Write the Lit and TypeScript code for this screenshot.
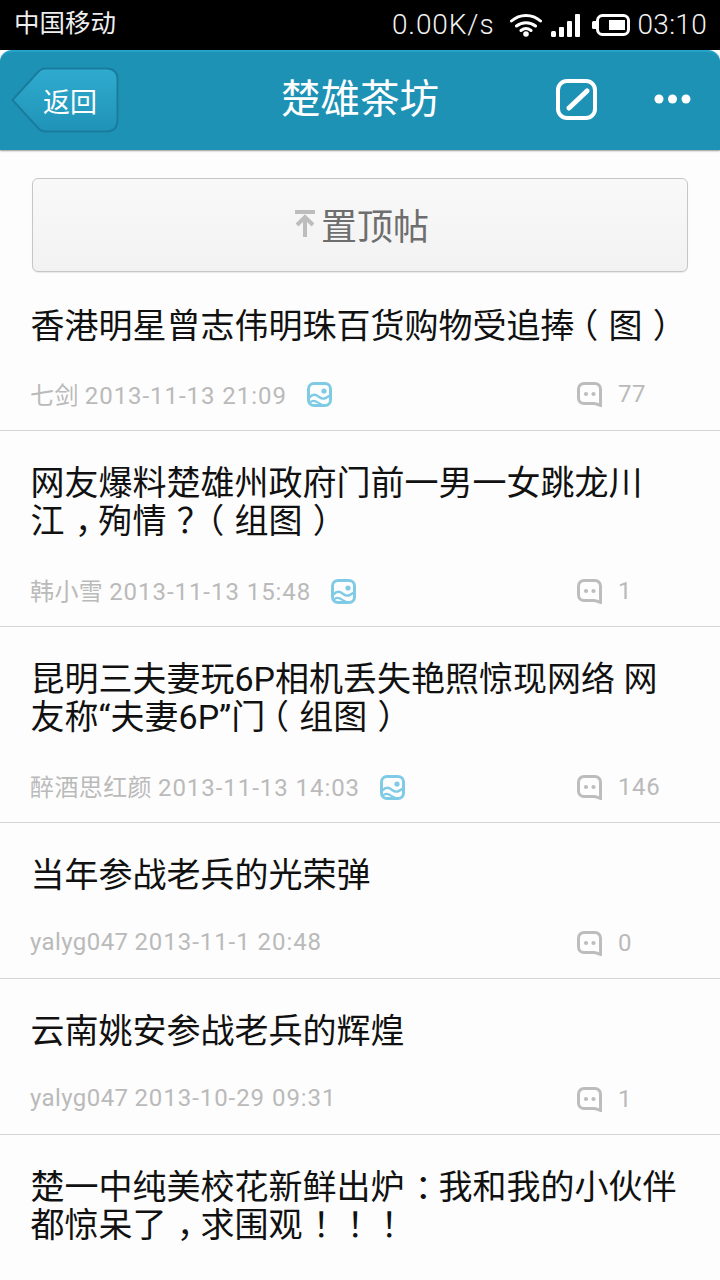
import { LitElement, css, html, svg } from 'lit';
import { customElement } from 'lit/decorators.js';

interface Post {
  title: string;
  author?: string;
  date?: string;
  hasImage?: boolean;
  replies?: number;
  wrapped?: boolean; // title takes two lines
}

const POSTS: Post[] = [
  { title: '香港明星曾志伟明珠百货购物受追捧（图）', author: '七剑', date: '2013-11-13 21:09', hasImage: true, replies: 77 },
  { title: '网友爆料楚雄州政府门前一男一女跳龙川江，殉情？（组图）', author: '韩小雪', date: '2013-11-13 15:48', hasImage: true, replies: 1, wrapped: true },
  { title: '昆明三夫妻玩6P相机丢失艳照惊现网络 网友称“夫妻6P”门（组图）', author: '醉酒思红颜', date: '2013-11-13 14:03', hasImage: true, replies: 146, wrapped: true },
  { title: '当年参战老兵的光荣弹', author: 'yalyg047', date: '2013-11-1 20:48', replies: 0 },
  { title: '云南姚安参战老兵的辉煌', author: 'yalyg047', date: '2013-10-29 09:31', replies: 1 },
  { title: '楚一中纯美校花新鲜出炉：我和我的小伙伴都惊呆了，求围观！！！', wrapped: true },
];

const imageIcon = svg`<svg width="25" height="25" viewBox="0 0 25 25">
  <rect x="1.500" y="1.500" width="22" height="22" rx="5.500" fill="none" stroke="#7fcbe6" stroke-width="3"/>
  <circle cx="17" cy="9" r="2.600" fill="#7fcbe6"/>
  <path d="M2.500 15.500c2.500-3 5-3.500 7.500-2s4.500 4 7.500 3 3-2 5-2.500" fill="none" stroke="#7fcbe6" stroke-width="2.400"/>
  <path d="M3 20.500c2-2 4-2 6-1s4 2.500 6 3" fill="none" stroke="#7fcbe6" stroke-width="2"/>
</svg>`;

const replyIcon = svg`<svg width="25" height="25" viewBox="0 0 25 25">
  <path d="M7 1.500h11a5.500 5.500 0 0 1 5.500 5.500v10c0 2 0 4 .2 6.500-2.500-1-4.700-2-6.700-2H7A5.500 5.500 0 0 1 1.500 16V7A5.500 5.500 0 0 1 7 1.500z" fill="none" stroke="#bdbdbd" stroke-width="3" stroke-linejoin="round"/>
  <circle cx="9" cy="12" r="2.100" fill="#bdbdbd"/>
  <circle cx="16.500" cy="12" r="2.100" fill="#bdbdbd"/>
</svg>`;

@customElement('app-root')
export class AppRoot extends LitElement {
  static styles = css`
    :host {
      display: block;
      width: 720px;
      height: 1280px;
      overflow: hidden;
      background: #fdfdfd;
      font-family: 'Roboto', 'Noto Sans CJK SC', sans-serif;
    }

    .status {
      height: 50px;
      background: #000;
      color: #eee;
      display: flex;
      align-items: center;
      padding: 0 13px 0 14px;
    }
    .status .carrier {
      flex: 1;
      font-size: 25.500px;
      line-height: 1;
      margin-top: -3px;
    }
    .status .speed,
    .status .time {
      font-size: 28px;
      font-weight: 300;
      line-height: 1;
      color: #f2f2f2;
    }
    .status .speed {
      letter-spacing: 0.900px;
      margin-right: 16px;
    }
    .status .time {
      letter-spacing: 0.300px;
      margin-left: 7px;
    }
    .status svg {
      display: block;
    }
    .status .signal {
      margin: 0 12px 0 9px;
    }

    .navbar {
      height: 100px;
      box-sizing: border-box;
      background: #1e92b5;
      border-top: 2px solid #22a5c9;
      border-radius: 12px 12px 0 0;
      box-shadow: 0 1px 2px rgba(0, 0, 0, 0.4);
      display: grid;
      grid-template-columns: 1fr auto 1fr;
      align-items: center;
      color: #fff;
    }
    .back {
      justify-self: start;
      margin-left: 11px;
      position: relative;
      width: 108px;
      height: 66px;
      margin-top: -3px;
    }
    .back svg {
      position: absolute;
      inset: 0;
    }
    .back span {
      position: absolute;
      left: 32px;
      top: 3px;
      line-height: 66px;
      font-size: 27px;
    }
    .title {
      font-size: 39.500px;
      line-height: 1;
      margin-top: -2px;
    }
    .actions {
      justify-self: end;
      display: flex;
      align-items: center;
      gap: 57px;
      padding-right: 29px;
      margin-top: -4px;
    }
    .actions svg {
      display: block;
    }

    .pinned {
      margin: 28px 32px 0;
      height: 94px;
      box-sizing: border-box;
      border: 1px solid #c6c6c6;
      border-radius: 6px;
      background: linear-gradient(#f9f9f9, #f2f2f2);
      box-shadow: 0 1px 1px rgba(0, 0, 0, 0.08);
      display: flex;
      align-items: center;
      justify-content: center;
      gap: 6px;
      padding-left: 4px;
      color: #6e6e6e;
      font-size: 36px;
    }
    .pinned span {
      margin-top: -2px;
    }
    .pinned svg {
      display: block;
      margin-top: -3px;
    }

    .post {
      padding: 33px 30px 0 30px;
      border-bottom: 1px solid #d4d4d4;
    }
    .post.first {
      padding-top: 35px;
    }
    .post .text {
      font-size: 34px;
      line-height: 38px;
      color: #111;
      padding-left: 0.500px;
    }
    /* keeps a shifted mark on the same line as the character before it */
    .nowrap {
      white-space: nowrap;
    }
    /* the reference centres full-width punctuation in its cell */
    .shift-right,
    .shift-left {
      display: inline-block;
    }
    .shift-right {
      transform: translateX(0.3em);
    }
    .shift-left {
      transform: translateX(-0.3em);
    }
    .meta {
      display: flex;
      align-items: center;
      height: 84px;
      box-sizing: border-box;
      padding-top: 12px;
      color: #bababa;
      font-size: 24px;
    }
    .post.first .meta {
      height: 85px;
      padding-top: 11px;
    }
    .post.wrapped .meta {
      height: 86px;
      padding-top: 13px;
    }
    .meta .author {
      letter-spacing: 0.400px;
    }
    .meta .date {
      letter-spacing: 0.950px;
    }
    .meta .image-icon {
      margin: 3px 0 0 20px;
    }
    .meta svg {
      display: block;
    }
    .meta .replies {
      margin-left: auto;
      width: 113px;
      display: flex;
      align-items: center;
      gap: 16px;
      letter-spacing: 0.600px;
    }
    .meta .replies svg {
      margin-top: 3px;
    }
    .meta .replies span {
      margin-top: 2px;
    }
  `;

  private renderTitle(title: string) {
    return title.split(/(.[，？！：（）]+)/).map((part, i) => {
      if (i % 2 === 0) return part;
      const marks = [...part.slice(1)].map(
        (mark) => html`<span class=${mark === '（' ? 'shift-left' : 'shift-right'}>${mark}</span>`,
      );
      return html`<span class="nowrap">${part[0]}${marks}</span>`;
    });
  }

  private renderPost(post: Post, index: number) {
    const classes = `post${post.wrapped ? ' wrapped' : ''}${index === 0 ? ' first' : ''}`;
    return html`
      <div class=${classes}>
        <div class="text">${this.renderTitle(post.title)}</div>
        <div class="meta">
          ${post.author
            ? html`<span><span class="author">${post.author}</span> <span class="date">${post.date}</span></span>
                ${post.hasImage ? html`<span class="image-icon">${imageIcon}</span>` : ''}
                <div class="replies">${replyIcon}<span>${post.replies}</span></div>`
            : ''}
        </div>
      </div>
    `;
  }

  render() {
    return html`
      <div class="status">
        <span class="carrier">中国移动</span>
        <span class="speed">0.00K/s</span>
        <svg width="32" height="24" viewBox="0 0 32 24">
          <path d="M1.500 8C9.500 .5 22.500 .5 30.500 8M6.500 13c5.500-4.500 13.500-4.500 19 0M11 17.500c3-2.300 7-2.300 10 0" fill="none" stroke="#fff" stroke-width="3" stroke-linecap="round"/>
          <circle cx="16" cy="21" r="2.800" fill="#fff"/>
        </svg>
        <svg class="signal" width="29" height="23" viewBox="0 0 29 23">
          <rect x="0" y="17" width="5" height="6" rx="1.500" fill="#fff"/>
          <rect x="8" y="13" width="5" height="10" rx="1" fill="#fff"/>
          <rect x="16" y="7" width="5" height="16" rx="1" fill="#fff"/>
          <rect x="24" y="0" width="5" height="23" rx="1" fill="#fff"/>
        </svg>
        <svg width="38" height="22" viewBox="0 0 38 22">
          <path d="M4 7H1.500Q0 7 0 8.500v5Q0 15 1.500 15H4z" fill="#fff"/>
          <rect x="5.500" y="1.500" width="31" height="19" rx="5" fill="none" stroke="#fff" stroke-width="3"/>
          <rect x="17" y="6" width="16" height="10" fill="#fff"/>
        </svg>
        <span class="time">03:10</span>
      </div>

      <div class="navbar">
        <div class="back">
          <svg width="108" height="66" viewBox="0 0 108 66">
            <defs>
              <linearGradient id="backFill" x1="0" y1="0" x2="0" y2="1">
                <stop offset="0" stop-color="#2fabcf"/>
                <stop offset="1" stop-color="#1f93b7"/>
              </linearGradient>
            </defs>
            <path d="M1.500 33 27 5Q30 1.500 35 1.500H95Q106.500 1.500 106.500 13V52Q106.500 64.500 95 64.500H35Q30 64.500 27 61Z" fill="url(#backFill)" stroke="#1a7c9d" stroke-width="2"/>
          </svg>
          <span>返回</span>
        </div>
        <div class="title">楚雄茶坊</div>
        <div class="actions">
          <svg width="41" height="41" viewBox="0 0 41 41">
            <rect x="2" y="2" width="37" height="37" rx="9" fill="none" stroke="#fff" stroke-width="4"/>
            <path d="M13 29 31 12" stroke="#fff" stroke-width="5" stroke-linecap="round"/>
          </svg>
          <svg width="37" height="10" viewBox="0 0 37 10">
            <circle cx="5" cy="5" r="4.500" fill="#fff"/>
            <circle cx="18.500" cy="5" r="4.500" fill="#fff"/>
            <circle cx="32" cy="5" r="4.500" fill="#fff"/>
          </svg>
        </div>
      </div>

      <div class="pinned">
        <svg width="20" height="28" viewBox="0 0 20 28">
          <rect x="0" y="0" width="20" height="4" fill="#bdbdbd"/>
          <path d="M10 27V8M2 15l8-8 8 8" fill="none" stroke="#bdbdbd" stroke-width="4"/>
        </svg>
        <span>置顶帖</span>
      </div>

      ${POSTS.map((post, i) => this.renderPost(post, i))}
    `;
  }
}

declare global {
  interface HTMLElementTagNameMap {
    'app-root': AppRoot;
  }
}
